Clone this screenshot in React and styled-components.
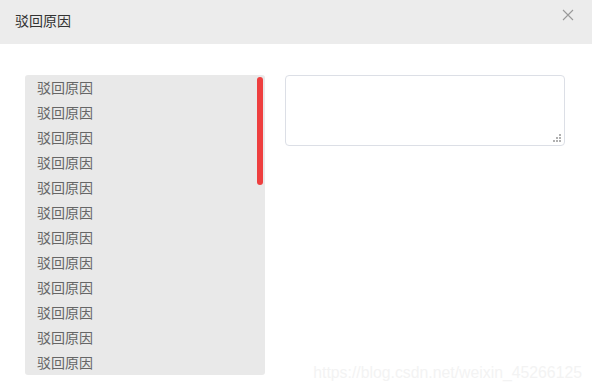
import React from "react";
import styled, { createGlobalStyle } from "styled-components";

const Global = createGlobalStyle`
  html, body { margin: 0; padding: 0; background: #fff; }
  body { font-family: "Noto Sans CJK SC", "Noto Sans", sans-serif; }
  * { box-sizing: border-box; }
`;

const Dialog = styled.div`
  position: relative;
  width: 592px;
  height: 390px;
  background: #fff;
  overflow: hidden;
`;

const Header = styled.div`
  height: 44px;
  background: #ececec;
  display: flex;
  align-items: center;
  justify-content: space-between;
  padding: 0 18px 0 15px;
`;

const Title = styled.div`
  font-size: 14px;
  color: #333;
  line-height: 20px;
  margin-top: -4px;
`;

const Close = styled.button`
  border: 0;
  background: transparent;
  padding: 0;
  width: 12px;
  height: 12px;
  display: flex;
  margin-top: -14px;
  cursor: pointer;
`;

const Body = styled.div`
  display: flex;
  gap: 20px;
  padding: 31px 0 0 25px;
  align-items: flex-start;
`;

const ListWrap = styled.div`
  position: relative;
  width: 240px;
  height: 300px;
  background: #e9e9e9;
  border-radius: 3px;
  overflow: hidden;
`;

const List = styled.ul`
  list-style: none;
  margin: 0;
  padding: 0;
`;

const Item = styled.li`
  height: 25px;
  line-height: 25px;
  padding-left: 12px;
  font-size: 14px;
  color: #666;
`;

const Thumb = styled.div`
  position: absolute;
  top: 2px;
  right: 2px;
  width: 6px;
  height: 108px;
  border-radius: 3px;
  background: #ee3f3f;
`;

const AreaWrap = styled.div`
  position: relative;
  width: 280px;
  height: 71px;
`;

const TextArea = styled.textarea`
  display: block;
  width: 100%;
  height: 100%;
  border: 1px solid #dcdfe6;
  border-radius: 4px;
  padding: 5px 10px;
  font-family: inherit;
  font-size: 14px;
  outline: none;
  resize: none;
`;

const Grip = styled.svg`
  position: absolute;
  right: 4px;
  bottom: 4px;
  pointer-events: none;
`;

const Watermark = styled.div`
  position: absolute;
  right: 10px;
  bottom: 8px;
  font-family: "Liberation Sans", Arial, sans-serif;
  font-size: 15.8px;
  color: #f3f3f3;
  pointer-events: none;
`;

export default function App() {
  const items = Array.from({ length: 12 }, (_, i) => i);
  return (
    <Dialog>
      <Global />
      <Header>
        <Title>驳回原因</Title>
        <Close aria-label="close">
          <svg width="12" height="12" viewBox="0 0 12 12">
            <path d="M1 1 L11 11 M11 1 L1 11" stroke="#999" strokeWidth="1.1" fill="none" />
          </svg>
        </Close>
      </Header>
      <Body>
        <ListWrap>
          <List>
            {items.map((i) => (
              <Item key={i}>驳回原因</Item>
            ))}
          </List>
          <Thumb />
        </ListWrap>
        <AreaWrap>
          <TextArea />
          <Grip width="8" height="8" viewBox="0 0 8 8">
            <g fill="#b0b0b0">
              <rect x="6" y="0" width="2" height="2" />
              <rect x="3" y="3" width="2" height="2" />
              <rect x="6" y="3" width="2" height="2" />
              <rect x="0" y="6" width="2" height="2" />
              <rect x="3" y="6" width="2" height="2" />
              <rect x="6" y="6" width="2" height="2" />
            </g>
          </Grip>
        </AreaWrap>
      </Body>
      <Watermark>https://blog.csdn.net/weixin_45266125</Watermark>
    </Dialog>
  );
}
